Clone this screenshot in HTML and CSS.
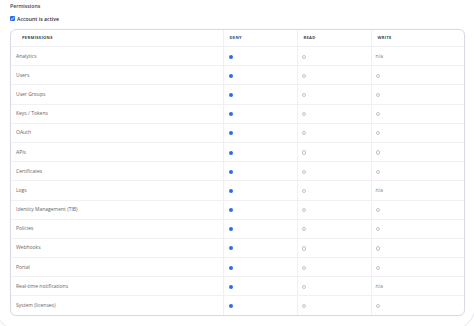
FILE: index.html
```html
<!DOCTYPE html>
<html lang="en">
<head>
    <meta charset="UTF-8">
    <title>Permissions</title>
    <link rel="stylesheet" href="styles.css">
</head>
<body>
    <div class="card">
        <div class="title">Permissions</div>
        <label class="active">
            <span class="check"><svg viewBox="0 0 10 10" width="5" height="5"><path d="M2 5.2 L4.2 7.2 L8 2.8" fill="none" stroke="#fff" stroke-width="1.8"/></svg></span>
            Account is active
        </label>
        <div class="table-box">
            <table class="perms">
                <colgroup>
                    <col class="c-name"><col class="c-opt"><col class="c-opt"><col class="c-write">
                </colgroup>
                <thead>
                    <tr><th class="first">Permissions</th><th>Deny</th><th>Read</th><th>Write</th></tr>
                </thead>
                <tbody id="rows"></tbody>
            </table>
        </div>
    </div>

    <script>
        const perms = [
            ['Analytics', false],
            ['Users', true],
            ['User Groups', true],
            ['Keys / Tokens', true],
            ['OAuth', true],
            ['APIs', true],
            ['Certificates', true],
            ['Logs', false],
            ['Identity Management (TIB)', true],
            ['Policies', true],
            ['Webhooks', true],
            ['Portal', true],
            ['Real-time notifications', false],
            ['System (licenses)', true]
        ];

        const tbody = document.getElementById('rows');
        perms.forEach(function (p) {
            const write = p[1] ? '<span class="radio"></span>' : '<span class="na">n/a</span>';
            tbody.innerHTML += '<tr><td class="first">' + p[0] + '</td>' +
                '<td><span class="radio on"></span></td>' +
                '<td><span class="radio"></span></td>' +
                '<td>' + write + '</td></tr>';
        });
    </script>
</body>
</html>
```

FILE: styles.css
```css
html, body {
    margin: 0;
    overflow: hidden;
}

body {
    font-family: 'Open Sans', 'Liberation Sans', sans-serif;
    color: #555;
    background: #fff;
}

.card {
    margin: -30px 0 0 -6px;
    width: 482px;
    padding: 29px 14px 14px 15px;
    box-sizing: border-box;
    border: 1px solid #e4e4ee;
    border-radius: 26px;
}

.title {
    margin-top: 2px;
    font-size: 5.2px;
    line-height: 8px;
    font-weight: 600;
    color: #3f3f4a;
}

.active {
    display: flex;
    align-items: center;
    gap: 2px;
    margin-top: 4.5px;
    height: 8px;
    font-size: 5.2px;
    font-weight: 600;
    color: #2f2f3a;
}

.check {
    display: flex;
    align-items: center;
    justify-content: center;
    width: 5px;
    height: 5px;
    border-radius: 1px;
    background: #2b6de8;
}

.table-box {
    margin-top: 6.5px;
    width: 453px;
    border: 1px solid #d9d9e6;
    border-radius: 6px;
    overflow: hidden;
    box-shadow: 0 0 1px rgba(120, 120, 160, 0.15);
}

.perms {
    width: 100%;
    border-collapse: collapse;
    table-layout: fixed;
}

.c-name { width: 212px; }
.c-opt { width: 74px; }
.c-write { width: auto; }

.perms th {
    height: 16px;
    padding: 0 0 0 6px;
    text-align: left;
    font-size: 4.1px;
    line-height: 6px;
    font-weight: 700;
    letter-spacing: 0.3px;
    text-transform: uppercase;
    color: #40404c;
    border-left: 1px solid #f0f0f3;
    border-bottom: 1px solid #eeeef2;
}

.perms th.first {
    padding-left: 11px;
}

.perms td {
    height: 17.2px;
    padding: 0 0 0 4px;
    font-size: 5px;
    line-height: 6px;
    color: #666;
    border-left: 1px solid #f0f0f3;
    border-top: 1px solid #f1f1f4;
    vertical-align: middle;
}

.perms th.first,
.perms td.first {
    border-left: none;
}

.perms td.first {
    padding-left: 5px;
    padding-bottom: 1px;
}

.radio {
    display: block;
    width: 4.2px;
    height: 4.2px;
    border: 0.5px solid #c2c2ca;
    border-radius: 50%;
    box-sizing: border-box;
    margin-top: 1px;
}

.radio.on {
    width: 4px;
    height: 4px;
    border: none;
    background: #2f6bef;
    margin-left: 1px;
}

.na {
    font-size: 4.8px;
    color: #777;
}
```
